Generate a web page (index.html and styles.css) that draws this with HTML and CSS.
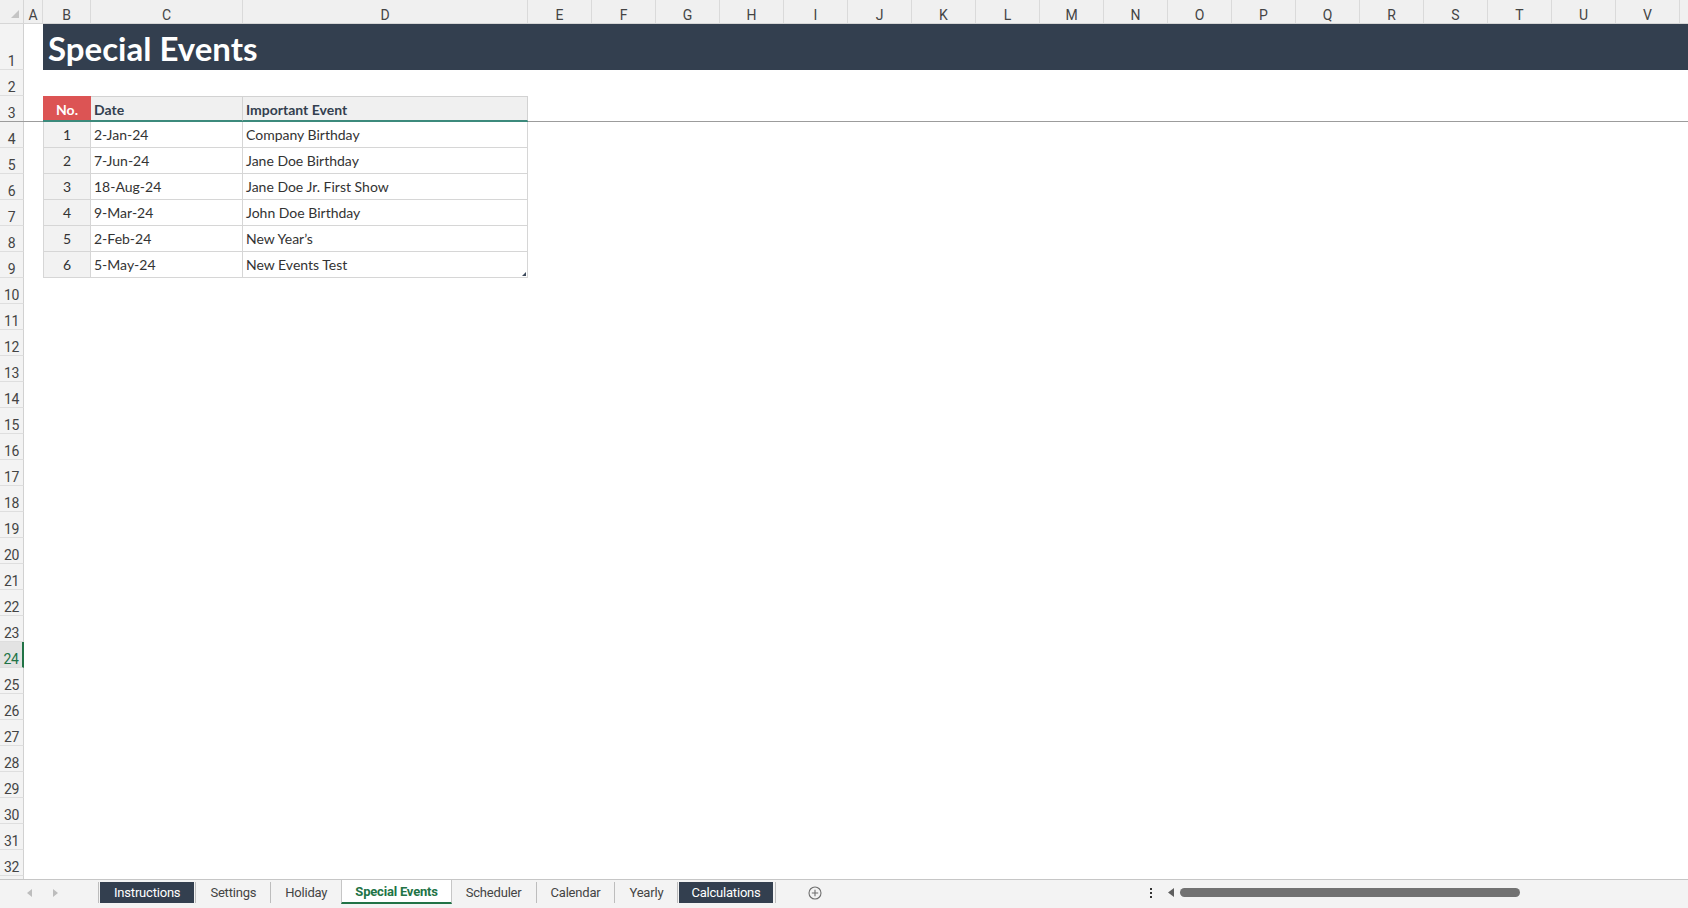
FILE: index.html
```html
<!DOCTYPE html>
<html>
<head>
<meta charset="utf-8">
<title>Special Events</title>
<link rel="stylesheet" href="styles.css">
</head>
<body>
<div class="app">
  <div class="colhead">
    <div class="corner"><svg width="8" height="8" viewBox="0 0 8 8"><polygon points="8,0 8,8 0,8" fill="#c4c4c4"/></svg></div>
    <div class="ch wa">A</div>
    <div class="ch wb">B</div>
    <div class="ch wc">C</div>
    <div class="ch wd">D</div>
    <div class="ch">E</div><div class="ch">F</div><div class="ch">G</div><div class="ch">H</div>
    <div class="ch">I</div><div class="ch">J</div><div class="ch">K</div><div class="ch">L</div>
    <div class="ch">M</div><div class="ch">N</div><div class="ch">O</div><div class="ch">P</div>
    <div class="ch">Q</div><div class="ch">R</div><div class="ch">S</div><div class="ch">T</div>
    <div class="ch">U</div><div class="ch">V</div><div class="ch rest"></div>
  </div>
  <div class="sheet">
    <div class="row r-title"><div class="rh">1</div><div class="ca"></div><div class="title">Special Events</div></div>
    <div class="row"><div class="rh">2</div></div>
    <div class="row r-head"><div class="rh">3</div><div class="ca"></div><div class="th no">No.</div><div class="th date">Date</div><div class="th event">Important Event</div></div>
    <div class="row"><div class="rh">4</div><div class="ca"></div><div class="td no">1</div><div class="td date">2-Jan-24</div><div class="td event">Company Birthday</div></div>
    <div class="row"><div class="rh">5</div><div class="ca"></div><div class="td no">2</div><div class="td date">7-Jun-24</div><div class="td event">Jane Doe Birthday</div></div>
    <div class="row"><div class="rh">6</div><div class="ca"></div><div class="td no">3</div><div class="td date">18-Aug-24</div><div class="td event">Jane Doe Jr. First Show</div></div>
    <div class="row"><div class="rh">7</div><div class="ca"></div><div class="td no">4</div><div class="td date">9-Mar-24</div><div class="td event">John Doe Birthday</div></div>
    <div class="row"><div class="rh">8</div><div class="ca"></div><div class="td no">5</div><div class="td date">2-Feb-24</div><div class="td event">New Year’s</div></div>
    <div class="row"><div class="rh">9</div><div class="ca"></div><div class="td no">6</div><div class="td date">5-May-24</div><div class="td event last">New Events Test<span class="handle"></span></div></div>
    <div class="row"><div class="rh">10</div></div>
    <div class="row"><div class="rh">11</div></div>
    <div class="row"><div class="rh">12</div></div>
    <div class="row"><div class="rh">13</div></div>
    <div class="row"><div class="rh">14</div></div>
    <div class="row"><div class="rh">15</div></div>
    <div class="row"><div class="rh">16</div></div>
    <div class="row"><div class="rh">17</div></div>
    <div class="row"><div class="rh">18</div></div>
    <div class="row"><div class="rh">19</div></div>
    <div class="row"><div class="rh">20</div></div>
    <div class="row"><div class="rh">21</div></div>
    <div class="row"><div class="rh">22</div></div>
    <div class="row"><div class="rh">23</div></div>
    <div class="row"><div class="rh sel">24</div></div>
    <div class="row"><div class="rh">25</div></div>
    <div class="row"><div class="rh">26</div></div>
    <div class="row"><div class="rh">27</div></div>
    <div class="row"><div class="rh">28</div></div>
    <div class="row"><div class="rh">29</div></div>
    <div class="row"><div class="rh">30</div></div>
    <div class="row"><div class="rh">31</div></div>
    <div class="row"><div class="rh">32</div></div>
    <div class="row"><div class="rh"></div></div>
  </div>
  <div class="tabbar">
    <div class="nav">
      <svg width="5" height="8" viewBox="0 0 5 8"><polygon points="5,0 5,8 0,4" fill="#bdbdbd"/></svg>
      <svg width="5" height="8" viewBox="0 0 5 8"><polygon points="0,0 0,8 5,4" fill="#bdbdbd"/></svg>
    </div>
    <div class="tabs">
      <div class="tab dark">Instructions</div>
      <div class="tab">Settings</div>
      <div class="tab">Holiday</div>
      <div class="tab active">Special Events</div>
      <div class="tab">Scheduler</div>
      <div class="tab">Calendar</div>
      <div class="tab">Yearly</div>
      <div class="tab dark calc">Calculations</div>
    </div>
    <div class="add">
      <svg width="14" height="14" viewBox="0 0 14 14"><circle cx="7" cy="7" r="6" fill="none" stroke="#6f6f6f" stroke-width="1.1"/><path d="M7 3.8v6.4M3.8 7h6.4" stroke="#6f6f6f" stroke-width="1.1"/></svg>
    </div>
    <div class="hscroll">
      <svg class="dots" width="4" height="12" viewBox="0 0 4 12"><rect x="1" y="1" width="2" height="2" fill="#333"/><rect x="1" y="5" width="2" height="2" fill="#333"/><rect x="1" y="9" width="2" height="2" fill="#333"/></svg>
      <svg class="larr" width="6" height="9" viewBox="0 0 6 9"><polygon points="6,0 6,9 0,4.5" fill="#5f5f5f"/></svg>
      <div class="thumb"></div>
    </div>
  </div>
</div>
</body>
</html>
```
FILE: styles.css
```css
html, body {
  margin: 0;
  padding: 0;
  background: #ffffff;
}
.app {
  width: 1688px;
  height: 908px;
  overflow: hidden;
  display: flex;
  flex-direction: column;
  font-family: Lato, "Open Sans", sans-serif;
}
/* column header */
.colhead {
  height: 24px;
  flex: none;
  display: flex;
  background: #f0f0f0;
  box-sizing: border-box;
  border-bottom: 1px solid #d6d6d6;
}
.corner {
  width: 24px;
  flex: none;
  box-sizing: border-box;
  border-right: 1px solid #d6d6d6;
  display: flex;
  align-items: flex-end;
  justify-content: flex-end;
  padding: 0 4px 5px 0;
}
.ch {
  width: 64px;
  flex: none;
  box-sizing: border-box;
  border-right: 1px solid #dadada;
  display: flex;
  align-items: center;
  justify-content: center;
  padding-top: 6px;
  font-family: Roboto, "Noto Sans", sans-serif;
  font-size: 14px;
  color: #444;
}
.ch.wa { width: 19px; }
.ch.wb { width: 48px; }
.ch.wc { width: 152px; }
.ch.wd { width: 285px; }
.ch.rest { flex: 1; border-right: none; }

/* sheet */
.sheet {
  flex: 1;
  overflow: hidden;
  display: flex;
  flex-direction: column;
}
.row {
  height: 26px;
  flex: none;
  display: flex;
  box-sizing: border-box;
}
.row.r-title { height: 46px; }
.rh {
  width: 24px;
  flex: none;
  box-sizing: border-box;
  border-right: 1px solid #d1d1d1;
  border-bottom: 1px solid #dedede;
  background: #f3f3f3;
  display: flex;
  align-items: flex-end;
  justify-content: center;
  padding-bottom: 0;
  font-family: Roboto, "Noto Sans", sans-serif;
  font-size: 14px;
  letter-spacing: -0.4px;
  line-height: 16px;
  color: #444;
}
.rh.sel {
  background: #e3e3e3;
  color: #217346;
  border-right: 2px solid #217346;
}
.ca { width: 19px; flex: none; }
.title {
  flex: 1;
  background: #333f4f;
  color: #ffffff;
  font-family: Lato, sans-serif;
  font-weight: 700;
  font-size: 33px;
  display: flex;
  align-items: center;
  padding-left: 5px;
  padding-top: 1px;
  box-sizing: border-box;
}
.r-head {
  border-bottom: 1px solid #9c9c9c;
}
.r-head .rh { border-bottom: none; }
.th, .td {
  flex: none;
  box-sizing: border-box;
  display: flex;
  align-items: center;
  font-size: 14px;
  color: #333;
}
.th {
  height: 25px;
  background: #f0f0f0;
  border-top: 1px solid #d2d2d2;
  border-right: 1px solid #d2d2d2;
  border-bottom: 1px solid #3c8a7c;
  box-shadow: 0 1px 0 #3c8a7c;
  font-weight: 700;
  color: #333f4f;
  padding: 1px 0 0 3px;
}
.th.no {
  background: #dc5454;
  border-top-color: #dc5454;
  border-right: none;
  color: #ffffff;
  justify-content: center;
  padding-left: 0;
}
.td {
  height: 26px;
  border-right: 1px solid #d6d6d6;
  border-bottom: 1px solid #d6d6d6;
  padding: 0 0 0 3px;
}
.no { width: 48px; }
.date { width: 152px; }
.event { width: 285px; }
.td.no {
  background: #f2f2f2;
  border-left: 1px solid #d6d6d6;
  justify-content: center;
  padding-left: 0;
}
.td.event { position: relative; }
.handle {
  position: absolute;
  right: 1px;
  bottom: 1px;
  width: 0;
  height: 0;
  border-left: 4px solid transparent;
  border-bottom: 4px solid #3d4a5c;
}

/* tab bar */
.tabbar {
  height: 29px;
  flex: none;
  box-sizing: border-box;
  border-top: 1px solid #c6c6c6;
  background: #f3f3f3;
  display: flex;
  align-items: flex-start;
  font-family: Roboto, "Noto Sans", sans-serif;
  font-size: 13px;
  letter-spacing: -0.2px;
}
.nav {
  width: 99px;
  flex: none;
  height: 21px;
  margin-top: 2px;
  box-sizing: border-box;
  border-right: 1px solid #bdbdbd;
  display: flex;
  align-items: center;
  padding-left: 27px;
  gap: 21px;
}
.tabs {
  display: flex;
  align-items: flex-start;
  flex: none;
}
.tab {
  height: 21px;
  margin-top: 2px;
  box-sizing: border-box;
  padding: 0 14px 1px;
  display: flex;
  align-items: center;
  color: #444;
  border-right: 1px solid #bdbdbd;
}
.tab.dark {
  background: #333f4f;
  color: #ffffff;
  border-right: none;
  margin-left: 1px;
  margin-right: 1px;
}
.tab.dark + .tab { border-left: 1px solid #bdbdbd; }
.tab.calc {
  margin-right: 2px;
  padding: 0 12px 1px;
}
.tab.active {
  height: 24px;
  margin-top: 0;
  background: #ffffff;
  color: #217346;
  font-weight: 700;
  border-left: 1px solid #c6c6c6;
  border-right: 1px solid #c6c6c6;
  border-bottom: 2px solid #217346;
  padding: 1px 13px 0;
  margin-left: -1px;
}
.tabs .tab:last-child { border-right: none; }
.tabs::after {
  content: "";
  width: 1px;
  height: 21px;
  margin-top: 2px;
  background: #bdbdbd;
}
.add {
  margin-left: 32px;
  height: 21px;
  margin-top: 2px;
  display: flex;
  align-items: center;
}
.hscroll {
  margin-left: auto;
  width: 542px;
  flex: none;
  height: 21px;
  margin-top: 2px;
  display: flex;
  align-items: center;
}
.dots { margin-left: 3px; }
.larr { margin-left: 15px; }
.thumb {
  margin-left: 6px;
  width: 340px;
  height: 9px;
  border-radius: 5px;
  background: #727272;
}
```
